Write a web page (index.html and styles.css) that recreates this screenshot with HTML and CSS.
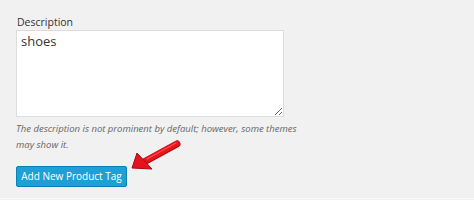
FILE: index.html
```html
<!DOCTYPE html>
<html>

<head>
    <meta charset="utf-8">
    <title>Add New Product Tag</title>
    <link rel="stylesheet" href="styles.css">
</head>

<body>
    <div id="wrap">
        <div class="form-field">
            <label for="tag-description">Description</label>
            <textarea id="tag-description" rows="5">shoes</textarea>
            <p class="description">The description is not prominent by default; however, some themes may show it.</p>
        </div>
        <p class="submit">
            <button type="button" class="button-primary">Add New Product Tag</button>
        </p>
        <!-- arrow pointing at the button -->
        <svg class="arrow" width="60" height="40" viewBox="0 0 60 40">
            <line x1="19" y1="27" x2="52" y2="9" stroke="#a80b10" stroke-width="7" stroke-linecap="round"/>
            <line x1="19" y1="26.5" x2="52" y2="8.5" stroke="#e8151c" stroke-width="5.5" stroke-linecap="round"/>
            <polygon points="7,33 12,18 27,34" fill="#e3141b" stroke="#a80b10" stroke-width="1" stroke-linejoin="round"/>
            <line x1="22" y1="24" x2="51" y2="8" stroke="#ff6a6e" stroke-width="1.2" stroke-linecap="round" opacity="0.7"/>
        </svg>
    </div>
</body>

</html>
```

FILE: styles.css
```css
* {
    margin: 0;
    padding: 0;
}

html,
body {
    height: 100%;
}

body {
    background: #f1f1f1;
    font: 400 10.5px/1.5 "Open Sans", "Liberation Sans", sans-serif;
    color: #444;
}

#wrap {
    position: relative;
    height: 199px;
    border-bottom: 1px solid #fbfbfb;
    padding: 14px 0 0 16px;
    box-sizing: border-box;
}

.form-field label {
    display: block;
    padding-left: 1px;
    line-height: 16px;
    color: #333;
}

.form-field textarea {
    display: block;
    width: 268px;
    height: 87px;
    box-sizing: border-box;
    margin-top: 0;
    padding: 2px 4px;
    border: 1px solid #ddd;
    background: #fff;
    font: 400 13px/16px "Open Sans", "Liberation Sans", sans-serif;
    color: #333;
    resize: vertical;
    outline: none;
}

.description {
    width: 290px;
    margin-top: 4px;
    font-style: italic;
    font-size: 9.5px;
    line-height: 16px;
    color: #666;
}

.submit {
    margin-top: 13px;
}

.button-primary {
    display: block;
    width: 111px;
    height: 21px;
    border: 1px solid #0d7fb3;
    border-radius: 2px;
    background: #1e9fd6;
    color: #fff;
    font: 400 10px/19px "Open Sans", "Liberation Sans", sans-serif;
    text-align: center;
    white-space: nowrap;
    cursor: pointer;
}

.arrow {
    position: absolute;
    left: 125px;
    top: 135px;
}
```
